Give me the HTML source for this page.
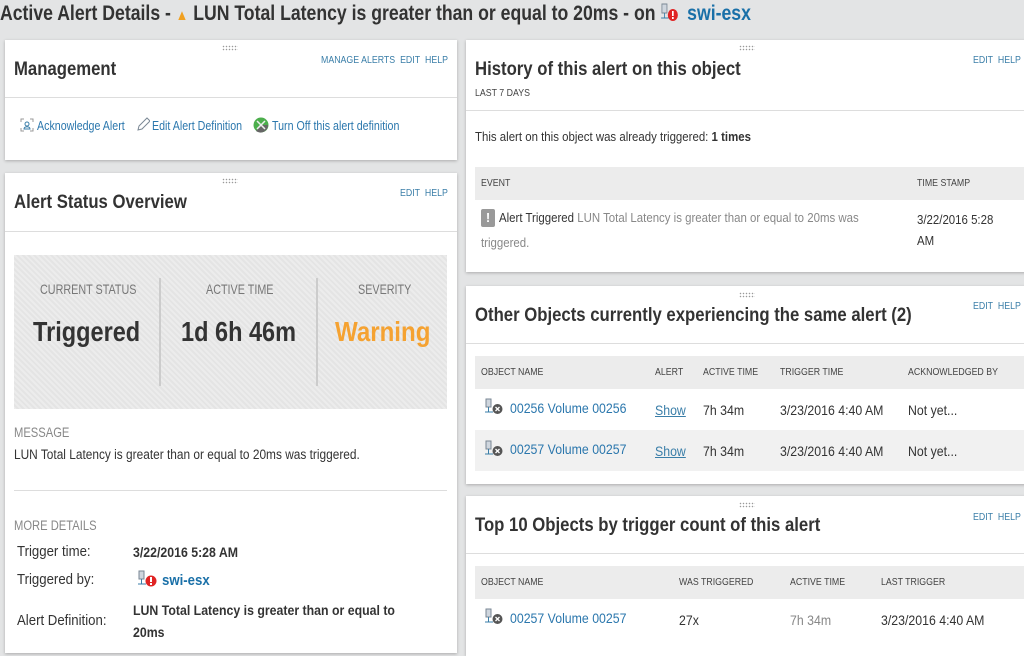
<!DOCTYPE html>
<html><head><meta charset="utf-8"><style>
*{margin:0;padding:0;box-sizing:border-box}
body{width:1024px;height:640px;overflow:hidden;background:#e3e4e5;font-family:"Liberation Sans",sans-serif;color:#333;position:relative}
.t{position:absolute;white-space:nowrap;transform:scaleX(.88);transform-origin:0 0;line-height:1}
.p{position:absolute;background:#fff;box-shadow:0 1px 3px rgba(0,0,0,.25)}
.h{position:absolute;width:16px;height:6px;background:radial-gradient(circle,#999 0.6px,transparent 0.9px) 0 0/3px 3px}
.sep{position:absolute;height:1px;background:#ddd}
.b{font-weight:bold}
.ln{color:#2b77ad}
.sm{font-size:10px;color:#3a7ea8}
.band{position:absolute;background:#ececec}
.th{font-size:10px;color:#444}
.td{font-size:13px;color:#333}
.ic{position:absolute}
</style></head><body>

<div class="t b" style="left:0;top:3px;font-size:21px;color:#333;transform:scaleX(.84)">Active Alert Details - <span style="color:#f0a020;font-size:15px">▲</span> LUN Total Latency is greater than or equal to 20ms - on <svg width="26" height="20" style="vertical-align:-3px"><rect x="2" y="1" width="6" height="9" fill="#cfd6de" stroke="#7a8794"/><line x1="5" y1="10" x2="5" y2="15" stroke="#3a7ea8"/><line x1="1" y1="15" x2="10" y2="15" stroke="#3a7ea8"/><circle cx="15" cy="12" r="6" fill="#e02424"/><rect x="14" y="8" width="2" height="5" fill="#fff"/><rect x="14" y="14" width="2" height="2" fill="#fff"/></svg> <span style="color:#1a70a8">swi-esx</span></div>

<!-- Management -->
<div class="p" style="left:5px;top:40px;width:452px;height:120px"></div>
<div class="h" style="left:222px;top:45px"></div>
<div class="t b" style="left:14px;top:60px;font-size:19px">Management</div>
<div class="t sm" style="left:321px;top:56px">MANAGE ALERTS&nbsp; EDIT&nbsp; HELP</div>
<div class="sep" style="left:5px;top:97px;width:452px"></div>
<svg class="ic" style="left:20px;top:118px" width="14" height="14"><path d="M1 4V1h3M10 1h3v3M13 10v3h-3M4 13H1v-3" fill="none" stroke="#999"/><circle cx="7" cy="6" r="2" fill="none" stroke="#3a7ea8"/><path d="M4 11c0-3 6-3 6 0z" fill="none" stroke="#3a7ea8"/></svg>
<div class="t ln" style="left:37px;top:119px;font-size:13px;transform:scaleX(.82)">Acknowledge Alert</div>
<svg class="ic" style="left:136px;top:117px" width="14" height="15"><path d="M2 13l1-4 8-8 3 3-8 8z" fill="none" stroke="#7a8794"/></svg>
<div class="t ln" style="left:152px;top:119px;font-size:13px;transform:scaleX(.82)">Edit Alert Definition</div>
<svg class="ic" style="left:253px;top:117px" width="16" height="16"><circle cx="8" cy="8" r="7.5" fill="#4cae4c"/><path d="M8 8l7 0a7.5 7.5 0 0 1-12 6z" fill="#666"/><path d="M4 4l8 8M12 4l-8 8" stroke="#eee" stroke-width="1.5"/></svg>
<div class="t ln" style="left:272px;top:119px;font-size:13px;transform:scaleX(.82)">Turn Off this alert definition</div>

<!-- Status -->
<div class="p" style="left:5px;top:173px;width:452px;height:480px"></div>
<div class="h" style="left:222px;top:178px"></div>
<div class="t b" style="left:14px;top:193px;font-size:19px">Alert Status Overview</div>
<div class="t sm" style="left:400px;top:189px">EDIT&nbsp; HELP</div>
<div class="sep" style="left:5px;top:231px;width:452px"></div>
<div style="position:absolute;left:14px;top:255px;width:433px;height:154px;background:repeating-linear-gradient(45deg,#ececec 0 2px,#e4e4e4 2px 4px)"></div>
<div style="position:absolute;left:159px;top:278px;width:2px;height:108px;background:#ccc"></div>
<div style="position:absolute;left:316px;top:278px;width:2px;height:108px;background:#ccc"></div>
<div class="t" style="left:40px;top:282px;font-size:14px;color:#777;transform:scaleX(.77)">CURRENT STATUS</div>
<div class="t" style="left:206px;top:282px;font-size:14px;color:#777;transform:scaleX(.77)">ACTIVE TIME</div>
<div class="t" style="left:358px;top:282px;font-size:14px;color:#777;transform:scaleX(.77)">SEVERITY</div>
<div class="t b" style="left:33px;top:318px;font-size:28px;color:#333;transform:scaleX(.84)">Triggered</div>
<div class="t b" style="left:181px;top:318px;font-size:28px;color:#333;transform:scaleX(.84)">1d 6h 46m</div>
<div class="t b" style="left:335px;top:318px;font-size:28px;color:#f5a231;transform:scaleX(.86)">Warning</div>
<div class="t" style="left:14px;top:425px;font-size:14px;color:#888;transform:scaleX(.8)">MESSAGE</div>
<div class="t" style="left:14px;top:448px;font-size:13.5px">LUN Total Latency is greater than or equal to 20ms was triggered.</div>
<div class="sep" style="left:14px;top:490px;width:433px"></div>
<div class="t" style="left:14px;top:518px;font-size:14px;color:#888;transform:scaleX(.8)">MORE DETAILS</div>
<div class="t" style="left:17px;top:544px;font-size:15px">Trigger time:</div>
<div class="t b" style="left:133px;top:545px;font-size:14px">3/22/2016 5:28 AM</div>
<div class="t" style="left:17px;top:572px;font-size:15px">Triggered by:</div>
<svg class="ic" style="left:137px;top:570px" width="22" height="18"><rect x="2" y="1" width="5" height="8" fill="#cfd6de" stroke="#7a8794"/><line x1="4.5" y1="9" x2="4.5" y2="14" stroke="#3a7ea8"/><line x1="1" y1="14" x2="9" y2="14" stroke="#3a7ea8"/><circle cx="14" cy="11" r="5.5" fill="#e02424"/><rect x="13" y="7" width="2" height="5" fill="#fff"/><rect x="13" y="13" width="2" height="2" fill="#fff"/></svg>
<div class="t b" style="left:162px;top:573px;font-size:15px;color:#1a70a8">swi-esx</div>
<div class="t" style="left:17px;top:613px;font-size:15px">Alert Definition:</div>
<div class="t b" style="left:133px;top:603px;font-size:14px">LUN Total Latency is greater than or equal to</div>
<div class="t b" style="left:133px;top:625px;font-size:14px">20ms</div>

<!-- History -->
<div class="p" style="left:466px;top:40px;width:570px;height:232px"></div>
<div class="h" style="left:739px;top:45px"></div>
<div class="t b" style="left:475px;top:60px;font-size:19px">History of this alert on this object</div>
<div class="t" style="left:475px;top:89px;font-size:10px;color:#444">LAST 7 DAYS</div>
<div class="t sm" style="left:973px;top:56px">EDIT&nbsp; HELP</div>
<div class="sep" style="left:466px;top:110px;width:570px"></div>
<div class="t" style="left:475px;top:130px;font-size:13px">This alert on this object was already triggered: <b>1 times</b></div>
<div class="band" style="left:475px;top:167px;width:560px;height:33px"></div>
<div class="t th" style="left:481px;top:179px">EVENT</div>
<div class="t th" style="left:917px;top:179px">TIME STAMP</div>
<div style="position:absolute;left:481px;top:209px;width:14px;height:18px;background:#999;border-radius:2px;color:#fff;font:bold 13px 'Liberation Sans';text-align:center;line-height:18px">!</div>
<div class="t" style="left:499px;top:211px;font-size:13px"><span style="color:#333">Alert Triggered</span> <span style="color:#888">LUN Total Latency is greater than or equal to 20ms was</span></div>
<div class="t" style="left:481px;top:236px;font-size:13px;color:#888">triggered.</div>
<div class="t td" style="left:917px;top:213px">3/22/2016 5:28</div>
<div class="t td" style="left:917px;top:234px">AM</div>

<!-- Other Objects -->
<div class="p" style="left:466px;top:286px;width:570px;height:198px"></div>
<div class="h" style="left:739px;top:292px"></div>
<div class="t b" style="left:475px;top:306px;font-size:19px">Other Objects currently experiencing the same alert (2)</div>
<div class="t sm" style="left:973px;top:302px">EDIT&nbsp; HELP</div>
<div class="sep" style="left:466px;top:343px;width:570px"></div>
<div class="band" style="left:475px;top:356px;width:560px;height:33px"></div>
<div class="t th" style="left:481px;top:368px">OBJECT NAME</div>
<div class="t th" style="left:655px;top:368px">ALERT</div>
<div class="t th" style="left:703px;top:368px">ACTIVE TIME</div>
<div class="t th" style="left:780px;top:368px">TRIGGER TIME</div>
<div class="t th" style="left:908px;top:368px">ACKNOWLEDGED BY</div>
<div class="band" style="left:475px;top:430px;width:560px;height:41px;background:#f1f1f1"></div>

<svg class="ic" style="left:484px;top:398px" width="20" height="18"><rect x="2" y="1" width="5" height="8" fill="#cfd6de" stroke="#7a8794"/><line x1="4.5" y1="9" x2="4.5" y2="14" stroke="#3a7ea8"/><line x1="1" y1="14" x2="9" y2="14" stroke="#3a7ea8"/><circle cx="13.5" cy="11" r="5" fill="#555"/><path d="M11.5 9l4 4M15.5 9l-4 4" stroke="#fff" stroke-width="1.3"/></svg>
<div class="t ln" style="left:510px;top:401px;font-size:14px">00256 Volume 00256</div>
<div class="t" style="left:655px;top:403px;font-size:14px;color:#3a7ea8;text-decoration:underline">Show</div>
<div class="t td" style="left:703px;top:403px;font-size:14px">7h 34m</div>
<div class="t td" style="left:780px;top:403px;font-size:14px">3/23/2016 4:40 AM</div>
<div class="t td" style="left:908px;top:403px;font-size:14px">Not yet...</div>

<svg class="ic" style="left:484px;top:440px" width="20" height="18"><rect x="2" y="1" width="5" height="8" fill="#cfd6de" stroke="#7a8794"/><line x1="4.5" y1="9" x2="4.5" y2="14" stroke="#3a7ea8"/><line x1="1" y1="14" x2="9" y2="14" stroke="#3a7ea8"/><circle cx="13.5" cy="11" r="5" fill="#555"/><path d="M11.5 9l4 4M15.5 9l-4 4" stroke="#fff" stroke-width="1.3"/></svg>
<div class="t ln" style="left:510px;top:442px;font-size:14px">00257 Volume 00257</div>
<div class="t" style="left:655px;top:444px;font-size:14px;color:#3a7ea8;text-decoration:underline">Show</div>
<div class="t td" style="left:703px;top:444px;font-size:14px">7h 34m</div>
<div class="t td" style="left:780px;top:444px;font-size:14px">3/23/2016 4:40 AM</div>
<div class="t td" style="left:908px;top:444px;font-size:14px">Not yet...</div>

<!-- Top 10 -->
<div class="p" style="left:466px;top:496px;width:570px;height:160px"></div>
<div class="h" style="left:739px;top:502px"></div>
<div class="t b" style="left:475px;top:516px;font-size:19px">Top 10 Objects by trigger count of this alert</div>
<div class="t sm" style="left:973px;top:513px">EDIT&nbsp; HELP</div>
<div class="sep" style="left:466px;top:553px;width:570px"></div>
<div class="band" style="left:475px;top:566px;width:560px;height:33px"></div>
<div class="t th" style="left:481px;top:578px">OBJECT NAME</div>
<div class="t th" style="left:679px;top:578px">WAS TRIGGERED</div>
<div class="t th" style="left:790px;top:578px">ACTIVE TIME</div>
<div class="t th" style="left:881px;top:578px">LAST TRIGGER</div>
<svg class="ic" style="left:484px;top:608px" width="20" height="18"><rect x="2" y="1" width="5" height="8" fill="#cfd6de" stroke="#7a8794"/><line x1="4.5" y1="9" x2="4.5" y2="14" stroke="#3a7ea8"/><line x1="1" y1="14" x2="9" y2="14" stroke="#3a7ea8"/><circle cx="13.5" cy="11" r="5" fill="#555"/><path d="M11.5 9l4 4M15.5 9l-4 4" stroke="#fff" stroke-width="1.3"/></svg>
<div class="t ln" style="left:510px;top:611px;font-size:14px">00257 Volume 00257</div>
<div class="t td" style="left:679px;top:613px;font-size:14px">27x</div>
<div class="t" style="left:790px;top:613px;font-size:14px;color:#888">7h 34m</div>
<div class="t td" style="left:881px;top:613px;font-size:14px">3/23/2016 4:40 AM</div>

</body></html>
